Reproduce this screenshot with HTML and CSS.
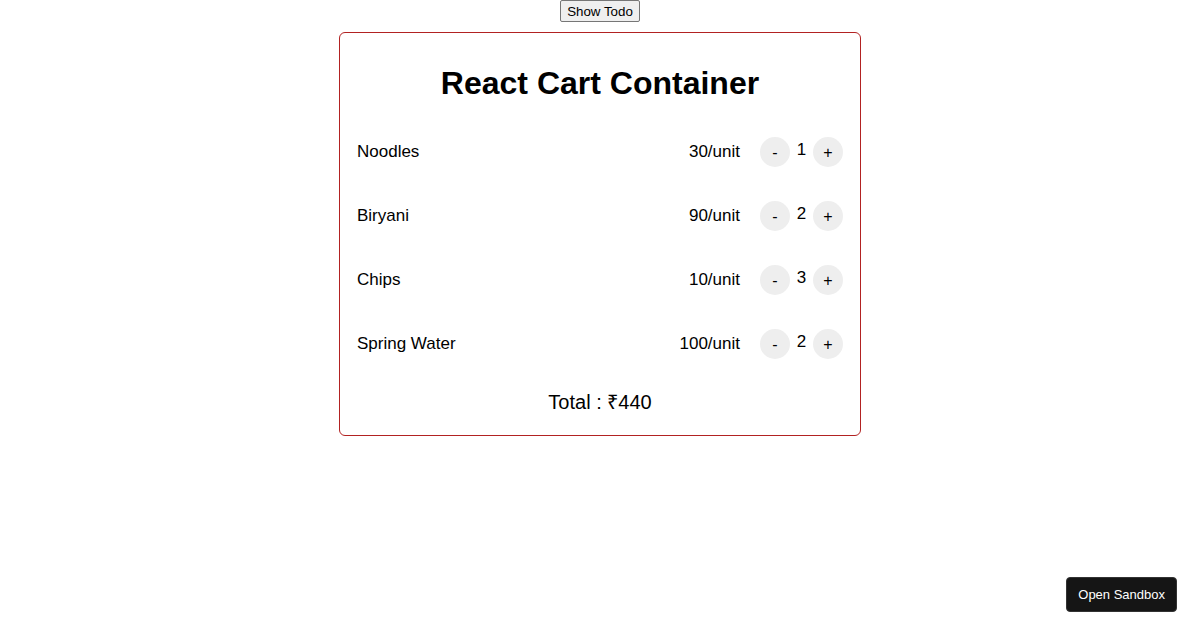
FILE: index.html
```html
<!DOCTYPE html>
<html lang="en">
<head>
    <meta charset="UTF-8">
    <meta name="viewport" content="width=device-width, initial-scale=1.0">
    <title>React Cart Container</title>
    <link rel="stylesheet" href="styles.css">
</head>
<body>
    <div class="top">
        <button class="toggle">Show Todo</button>
    </div>

    <!-- Cart -->
    <div class="cart">
        <h1>React Cart Container</h1>

        <div class="item">
            <span class="name">Noodles</span>
            <span class="price">30/unit</span>
            <div class="qty">
                <button class="round">-</button>
                <span class="count">1</span>
                <button class="round">+</button>
            </div>
        </div>

        <div class="item">
            <span class="name">Biryani</span>
            <span class="price">90/unit</span>
            <div class="qty">
                <button class="round">-</button>
                <span class="count">2</span>
                <button class="round">+</button>
            </div>
        </div>

        <div class="item">
            <span class="name">Chips</span>
            <span class="price">10/unit</span>
            <div class="qty">
                <button class="round">-</button>
                <span class="count">3</span>
                <button class="round">+</button>
            </div>
        </div>

        <div class="item">
            <span class="name">Spring Water</span>
            <span class="price">100/unit</span>
            <div class="qty">
                <button class="round">-</button>
                <span class="count">2</span>
                <button class="round">+</button>
            </div>
        </div>

        <div class="total">Total : ₹440</div>
    </div>

    <a class="sandbox">Open Sandbox</a>
</body>
</html>
```

FILE: styles.css
```css
body {
    margin: 0;
    font-family: "Liberation Sans", Arial, sans-serif;
    color: #000;
    background: #fff;
}
.top {
    text-align: center;
}
.toggle {
    font-family: "Liberation Sans", Arial, sans-serif;
    font-size: 13.33px;
    padding: 1px 6px;
    height: 22px;
    border: 1px solid #767676;
    border-radius: 2px;
    background-color: #efefef;
    color: #000;
}
.cart {
    width: 486px;
    margin: 10px auto 0;
    padding: 0 17px 20px;
    border: 1px solid #b22222;
    border-radius: 6px;
}
h1 {
    margin: 0;
    padding: 32px 0 18px;
    font-size: 32px;
    text-align: center;
}
.item {
    display: flex;
    align-items: center;
    height: 64px;
    font-size: 17px;
}
.name {
    flex: 1;
}
.price {
    margin-right: 20px;
}
.qty {
    display: flex;
    align-items: center;
    gap: 6px;
}
.count {
    width: 11px;
    text-align: center;
    margin-top: -4px;
}
.round {
    width: 30px;
    height: 30px;
    border: none;
    border-radius: 50%;
    background-color: #eeeeee;
    font-family: "Liberation Sans", Arial, sans-serif;
    font-size: 16px;
    color: #000;
    padding: 2px 0 0;
}
.total {
    text-align: center;
    font-size: 20px;
    padding-top: 12px;
}
.sandbox {
    position: fixed;
    right: 23px;
    bottom: 18px;
    padding: 9px 11px;
    background-color: #151515;
    color: #fff;
    font-size: 13px;
    border-radius: 4px;
    border: 1px solid #333;
}
```
